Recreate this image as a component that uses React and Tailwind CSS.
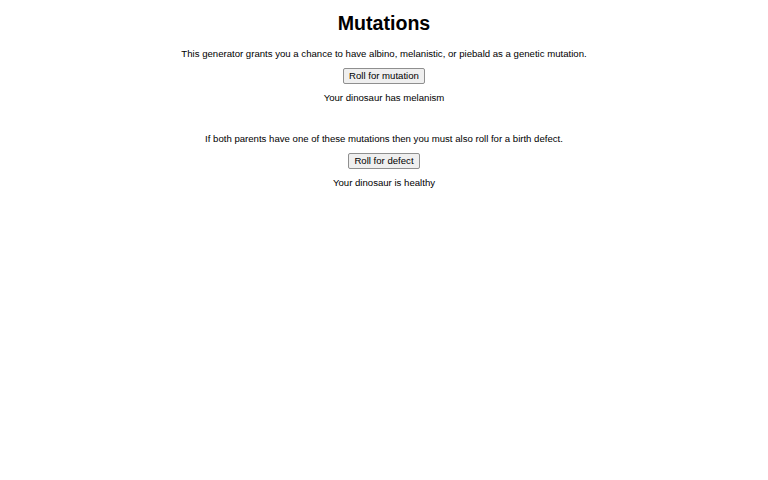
import React, { useState } from "react";

// Roll button styled like a plain browser button
function RollButton({ children, onClick }) {
    return (
        <button
            onClick={onClick}
            className="block mx-auto h-4 px-[5px] text-[9.6px] leading-[14px] text-black bg-[#efefef] border border-[#8f8f8f] rounded-[2px]"
        >
            {children}
        </button>
    );
}

export default function App() {
    const [mutation, setMutation] = useState("Your dinosaur has melanism");
    const [defect, setDefect] = useState("Your dinosaur is healthy");

    const rollMutation = () => {
        const results = [
            "Your dinosaur has albinism",
            "Your dinosaur has melanism",
            "Your dinosaur is piebald",
            "Your dinosaur has no mutation",
        ];
        setMutation(results[Math.floor(Math.random() * results.length)]);
    };

    const rollDefect = () => {
        setDefect(Math.random() < 0.5 ? "Your dinosaur is healthy" : "Your dinosaur has a birth defect");
    };

    return (
        <div className="min-h-[480px] bg-white text-black text-center font-['Liberation_Sans',Arial,sans-serif]">
            <h1 className="pt-[11px] text-[19.6px] leading-6 font-bold">Mutations</h1>

            <p className="mt-[13px] text-[9.6px] leading-3">
                This generator grants you a chance to have albino, melanistic, or piebald as a genetic mutation.
            </p>
            <div className="mt-[8px]">
                <RollButton onClick={rollMutation}>Roll for mutation</RollButton>
            </div>
            <p className="mt-2 text-[9.6px] leading-3">{mutation}</p>

            <p className="mt-[29px] text-[9.6px] leading-3">
                If both parents have one of these mutations then you must also roll for a birth defect.
            </p>
            <div className="mt-2">
                <RollButton onClick={rollDefect}>Roll for defect</RollButton>
            </div>
            <p className="mt-2 text-[9.6px] leading-3">{defect}</p>
        </div>
    );
}
